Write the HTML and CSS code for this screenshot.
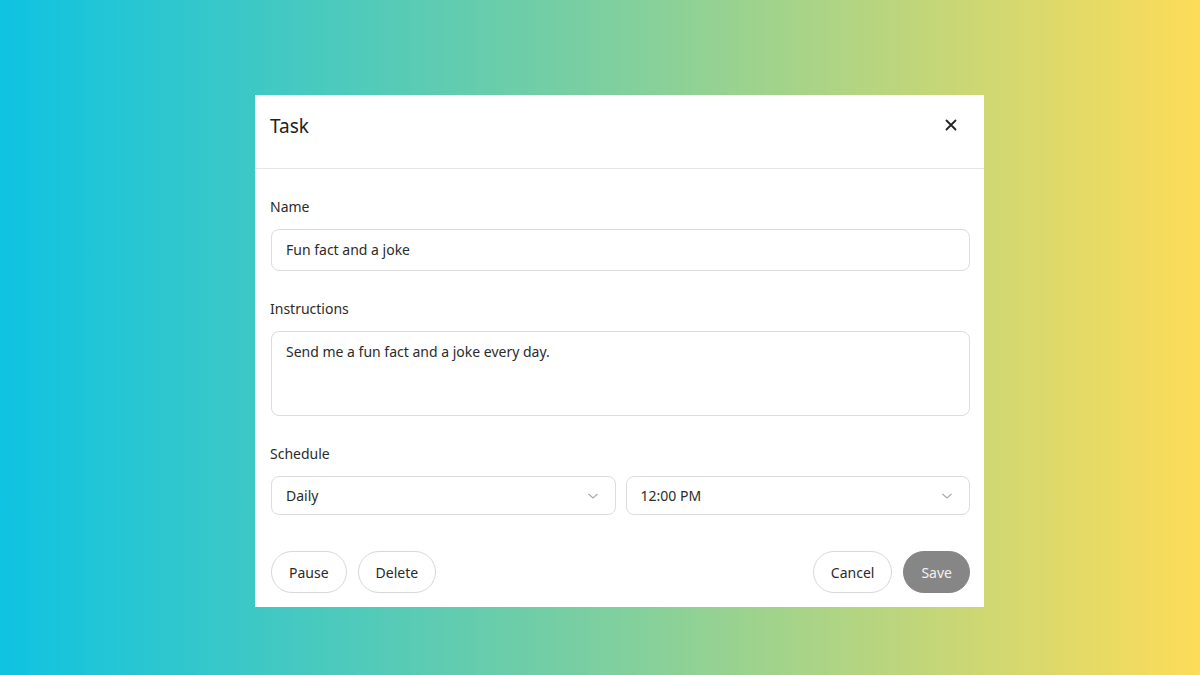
FILE: index.html
```html
<!DOCTYPE html>
<html lang="en">

<head>
    <meta charset="UTF-8">
    <meta name="viewport" content="width=device-width, initial-scale=1.0">
    <title>Task</title>
    <link rel="stylesheet" href="styles.css">
</head>

<body>
    <div class="page">
        <!-- task modal -->
        <div class="modal">
            <div class="modal_head">
                <h2 class="modal_title">Task</h2>
                <button class="close_btn" aria-label="Close">
                    <svg width="12" height="12" viewBox="0 0 12 12">
                        <path d="M1.5 1.5L10.5 10.5M10.5 1.5L1.5 10.5" stroke="#222" stroke-width="1.8" stroke-linecap="round" />
                    </svg>
                </button>
            </div>

            <div class="modal_body">
                <div class="field">
                    <label class="field_label">Name</label>
                    <div class="input">Fun fact and a joke</div>
                </div>

                <div class="field">
                    <label class="field_label">Instructions</label>
                    <div class="input textarea">Send me a fun fact and a joke every day.</div>
                </div>

                <div class="field">
                    <label class="field_label">Schedule</label>
                    <div class="select_row">
                        <div class="select">
                            <span>Daily</span>
                            <svg width="12" height="8" viewBox="0 0 12 8">
                                <path d="M1.5 2l4.5 4 4.5-4" fill="none" stroke="#aaa" stroke-width="1.2" />
                            </svg>
                        </div>
                        <div class="select">
                            <span>12:00 PM</span>
                            <svg width="12" height="8" viewBox="0 0 12 8">
                                <path d="M1.5 2l4.5 4 4.5-4" fill="none" stroke="#aaa" stroke-width="1.2" />
                            </svg>
                        </div>
                    </div>
                </div>

                <!-- footer -->
                <div class="modal_foot">
                    <div class="btn_group">
                        <button class="btn">Pause</button>
                        <button class="btn">Delete</button>
                    </div>
                    <div class="btn_group">
                        <button class="btn">Cancel</button>
                        <button class="btn btn_save">Save</button>
                    </div>
                </div>
            </div>
        </div>
    </div>
</body>

</html>
```

FILE: styles.css
```css
* {
    box-sizing: border-box;
}

body {
    margin: 0;
    font-family: "Noto Sans", "Open Sans", sans-serif;
    color: #2b2b2b;
}

.page {
    width: 1200px;
    height: 675px;
    padding-top: 95px;
    background: linear-gradient(90deg, #0fc3e1 0%, #7ccfa0 50%, #fddc58 100%);
}

.modal {
    width: 729px;
    height: 512px;
    margin-left: 255px;
    background: #fff;
}

.modal_head {
    height: 74px;
    padding: 19px 15px 0;
    display: flex;
    align-items: flex-start;
    justify-content: space-between;
    border-bottom: 1px solid #e4e4e4;
}

.modal_title {
    margin: 0;
    font-size: 19px;
    line-height: 24px;
    font-weight: 400;
    color: #222;
}

.close_btn {
    border: none;
    background: none;
    padding: 0;
    margin: 4px 11px 0 0;
    width: 14px;
    height: 14px;
    display: flex;
    align-items: center;
    justify-content: center;
}

.modal_body {
    padding: 28px 14px 15px 16px;
}

.field {
    margin-bottom: 28px;
}

.field_label {
    display: block;
    font-size: 14px;
    line-height: 20px;
    margin-left: -1px;
    margin-bottom: 12px;
}

.input {
    height: 42px;
    border: 1px solid #dcdcdc;
    border-radius: 8px;
    padding: 0 14px;
    font-size: 14px;
    line-height: 40px;
}

.textarea {
    height: 85px;
    line-height: 20px;
    padding-top: 10px;
}

.select_row {
    display: flex;
    gap: 10px;
}

.select {
    flex: 1;
    height: 39px;
    border: 1px solid #dcdcdc;
    border-radius: 8px;
    padding: 0 16px 0 14px;
    font-size: 14px;
    display: flex;
    align-items: center;
    justify-content: space-between;
}

.modal_foot {
    display: flex;
    justify-content: space-between;
    margin-top: 36px;
}

.btn_group {
    display: flex;
    gap: 11px;
}

.btn {
    height: 42px;
    padding: 0 17px;
    border: 1px solid #d8d8d8;
    border-radius: 21px;
    background: #fff;
    font-family: inherit;
    font-size: 14px;
    color: #2b2b2b;
}

.btn_save {
    background: #868686;
    border-color: #868686;
    color: #f2f2f2;
}
```
